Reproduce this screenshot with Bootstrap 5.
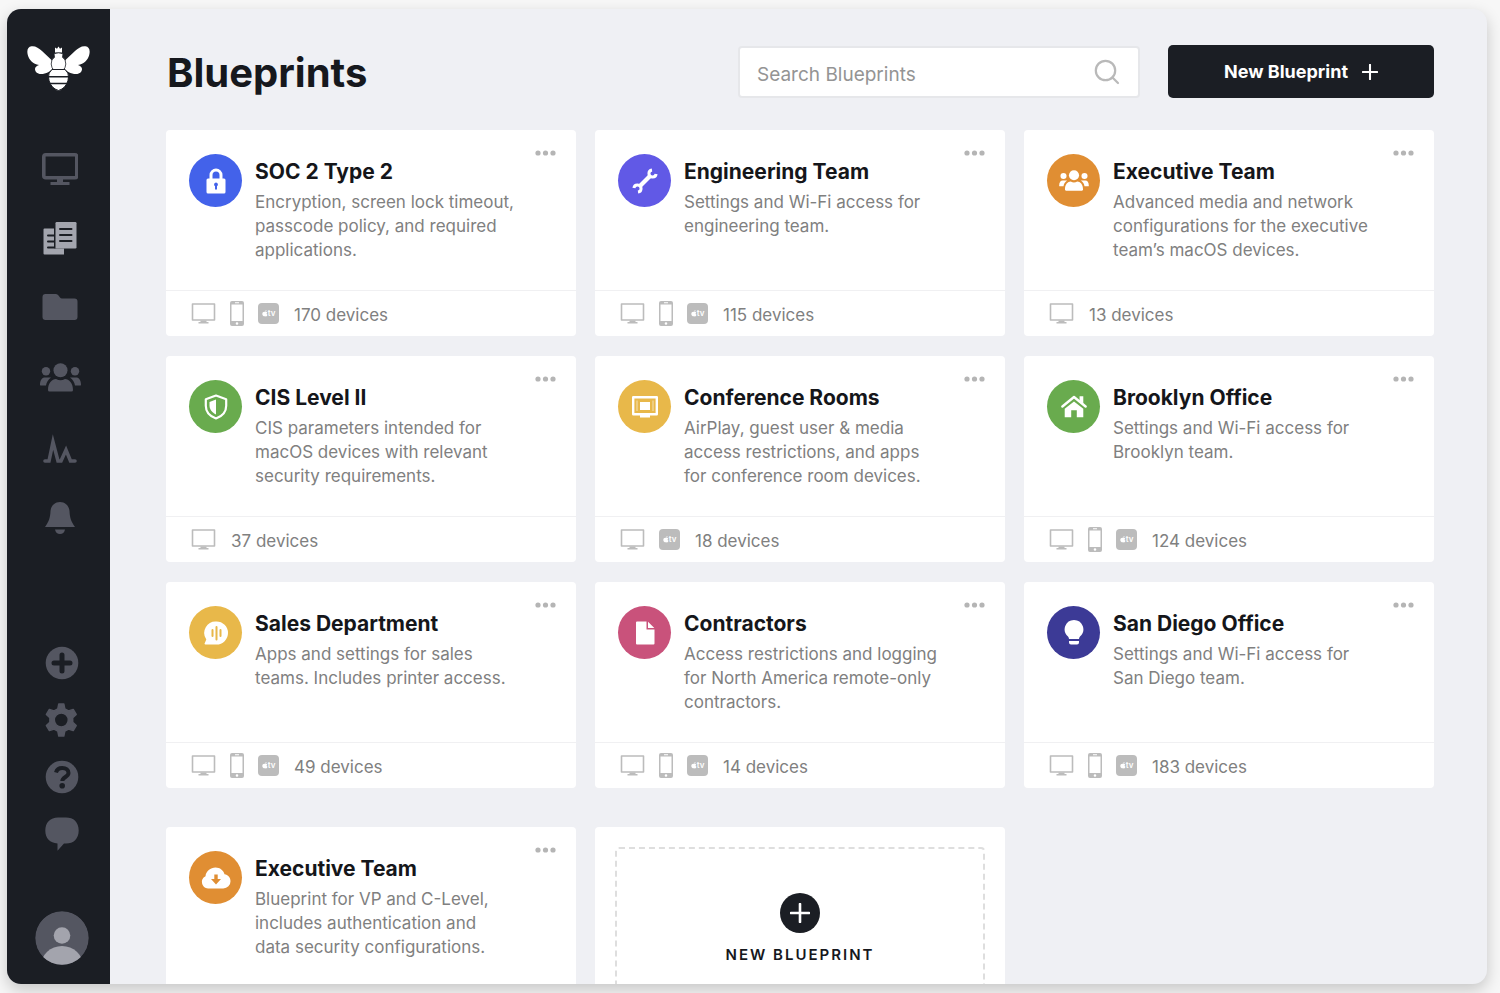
<!DOCTYPE html>
<html lang="en">
<head>
<meta charset="utf-8">
<meta name="viewport" content="width=device-width, initial-scale=1">
<title>Blueprints</title>
<link href="https://cdn.jsdelivr.net/npm/bootstrap@5.3.0/dist/css/bootstrap.min.css" rel="stylesheet">
<style>
  body { font-family: Inter, "Liberation Sans", sans-serif; background: #f7f7f7; color: #16181d; padding: 9px 13px 9px 7px; height: 100vh; overflow: hidden; }
  .app-window { border-radius: 14px; background: #eff0f4; box-shadow: 0 6px 16px rgba(0,0,0,.2); overflow: hidden; }
  .side { width: 103px; background: #1b1e24; padding: 37px 0 19px; }
  .side a { color: #545661; line-height: 0; }
  .side a.current { color: #a3a5ae; }
  .side-main { gap: 34px; margin-top: 59px; padding-left: 3px; }
  .side-tools { gap: 23px; padding-left: 7px; margin-bottom: 60px; }
  .side-user { padding-left: 7px; }
  .page { padding: 36px 53px 0 56px; }
  .page-head { margin-bottom: 32px; gap: 28px; }
  .page-head h1 { font-size: 40px; font-weight: 700; line-height: 51px; padding: 2px 0 0 1px; }
  .search-box { width: 402px; height: 52px; background: #fff; border: 2px solid #e6e7ea; border-radius: 4px; padding-right: 18px; }
  .search-box input { font-size: 19px; padding: 5px 0 0 17px; border: 0; box-shadow: none; background: none; color: #333; }
  .search-box input::placeholder { color: #949494; }
  .new-btn { width: 266px; height: 53px; background: #1b1e24; color: #fff; border-radius: 5px; font-size: 18px; font-weight: 700; gap: 14px; }
  .new-btn:hover { background: #2b2f38; color: #fff; }
  .tiles { display: grid; grid-template-columns: repeat(3, minmax(0, 1fr)); gap: 20px 19px; }
  .tiles-more { margin-top: 39px; }
  .tile { border: 0; border-radius: 4px; height: 206px; }
  .tile .card-body { padding: 24px 20px 0 23px; gap: 13px; }
  .tile h2 { font-size: 21px; font-weight: 700; line-height: 28px; margin: 4px 0; color: #15161a; }
  .tile p { font-size: 17px; line-height: 24px; color: #808080; margin: 0; max-width: 260px; }
  .disc { width: 53px; height: 53px; border-radius: 50%; color: #fff; flex: none; }
  .blue { background: #4362ea; } .violet { background: #6159e6; } .orange { background: #e08e33; }
  .green { background: #69ab4e; } .yellow { background: #e8b84a; } .pink { background: #c9527b; } .indigo { background: #3c3a96; }
  .dots { top: 12px; right: 20px; padding: 0; border: 0; background: none; color: #b5b5b5; line-height: 0; height: 22px; }
  .tile .card-footer { height: 46px; border-top: 1px solid #f0f0f2; background: none; padding: 0 25px; gap: 14px; color: #bcbcbc; }
  .count { font-size: 17px; line-height: 24px; padding: 3px 0 0 1px; color: #808080; }
  .atv { width: 21px; height: 21px; border-radius: 4px; background: #bcbcbc; color: #fff; font-size: 8px; font-weight: 600; line-height: 21px; }
  .add-box { margin: 20px; border: 2px dashed #dedede; border-radius: 4px; background: none; gap: 10px; font-size: 15px; font-weight: 600; line-height: 24px; letter-spacing: 2px; color: #16181d; }
  .add-disc { width: 40px; height: 40px; border-radius: 50%; background: #1b1e24; color: #fff; }
</style>
</head>
<body>
<svg width="0" height="0" class="position-absolute" aria-hidden="true">
  <symbol id="monitor" viewBox="0 0 25 21"><path d="M1.500 1h22v16h-22z" fill="none" stroke="currentColor" stroke-width="1.600" stroke-linejoin="round"/><path d="M9.500 17.500h6v1.500h2v1.600h-10V19h2z" fill="currentColor"/></symbol>
  <symbol id="phone" viewBox="0 0 14 25"><path fill="currentColor" fill-rule="evenodd" d="M2 0h10a2 2 0 0 1 2 2v21a2 2 0 0 1-2 2H2a2 2 0 0 1-2-2V2a2 2 0 0 1 2-2zM1.500 3.500v16.500h11V3.500zM5 1.300v1h4v-1zM7 21.200a1.300 1.300 0 1 0 0 2.600a1.300 1.300 0 1 0 0-2.600z"/></symbol>
  <symbol id="apple" viewBox="0 0 6 7"><path fill="currentColor" d="M3.300 2c.7-.5 1.600-.3 2 .2-1 .8-.8 2.100.2 2.600C5 6.300 4.300 6.700 3.300 6.200 2.300 6.700.300 6 .300 3.900.300 2.300 1.800 1.400 3.300 2zM3.200 1.600c0-.9.600-1.500 1.300-1.600 0 .9-.6 1.600-1.300 1.600z"/></symbol>
  <symbol id="more" viewBox="0 0 21 6"><g fill="currentColor"><circle cx="3" cy="3" r="2.600"/><circle cx="10.500" cy="3" r="2.600"/><circle cx="18" cy="3" r="2.600"/></g></symbol>
  <symbol id="plus" viewBox="0 0 20 20"><path d="M10 1v18M1 10h18" stroke="currentColor" stroke-width="2.600" stroke-linecap="round"/></symbol>
  <symbol id="people" viewBox="0 0 41 29"><g fill="currentColor"><circle cx="20.500" cy="7.200" r="7"/><circle cx="6" cy="8.200" r="4.200"/><circle cx="35" cy="8.200" r="4.200"/><path d="M8 27c0-7 4-11 8-11 3 1.600 6 1.600 9 0 4 0 8 4 8 11q0 1.500-1.500 1.500h-22Q8 28.500 8 27zM0 22c0-5 2-7.500 5-7.500h6C8 17 6.500 19 6 22.500H1.500Q0 22.500 0 22zM41 22c0-5-2-7.500-5-7.500h-6c3 2.500 4.500 4.500 5 8h4.500q1.500 0 1.500-.5z"/></g></symbol>
</svg>

<div class="app-window d-flex h-100">
  <aside class="side d-flex flex-column align-items-center flex-shrink-0">
    <a href="#" class="text-white" aria-label="Home"><svg width="63" height="45" viewBox="0 0 63 45" fill="currentColor">
      <g id="wing"><path d="M4.500.300C8-.3 12 2 15 5l9 8.500q3 3 2.500 7C24 26 19 28 14 28c-4 0-6-2.500-6-5 0-2 1.500-3 4-4C6 18 2 14 .800 9-.5 4 1 .800 4.500.300z"/></g>
      <use href="#wing" transform="matrix(-1 0 0 1 63 0)"/>
      <path d="M28 1.500l2 1.300L31.500.500 33 2.800l2-1.300v5h-7z"/>
      <path stroke="#1b1e24" stroke-width=".8" d="M27 7.800q4.500-2 9 0l-.5 3.500q3.500 2 3.300 6.700-.5 4-2 5.500h-10.600q-1.500-1.500-2-5.500-.2-4.700 3.300-6.700z"/>
      <path stroke="#1b1e24" stroke-width="1" d="M25 23.500h13q4 3.500 3.500 7.500-.5 8-6.500 12-3.500 3-7 0-6-4-6.500-12-.5-4 3.500-7.500z"/>
      <path stroke="#1b1e24" stroke-width="1.500" d="M21 30.800h21M21.500 37.500h20"/>
    </svg></a>
    <nav class="side-main d-flex flex-column align-items-center" aria-label="Main">
      <a href="#" aria-label="Devices"><svg width="36" height="36" viewBox="0 0 36 36"><rect x="1.800" y="4.800" width="33" height="23" rx="2" fill="none" stroke="currentColor" stroke-width="3.600"/><path fill="currentColor" d="M15 29h6v3h6.500v3h-19v-3H15z"/></svg></a>
      <a href="#" class="current" aria-label="Blueprints"><svg width="36" height="36" viewBox="0 0 36 36"><path fill="currentColor" d="M2.500 8.500H12v20h10v6H2.500q-1 0-1-1v-24q0-1 1-1z"/><rect x="13.500" y="2" width="21" height="26.500" rx="1.200" fill="currentColor"/><path d="M18 9h11.500M18 15h11.500M18 21h11.500M6 15.500h6M6 21.500h6M6 27.500h6" stroke="#1b1e24" stroke-width="2" stroke-linecap="round"/></svg></a>
      <a href="#" aria-label="Library"><svg width="36" height="36" viewBox="0 0 36 36"><path fill="currentColor" d="M3.500 4H14q1.500 0 2.500 1.500l1.500 2q.8 1 2 1h12.500q3 0 3 3V27q0 3-3 3h-29q-3 0-3-3V7q0-3 3-3z"/></svg></a>
      <a href="#" aria-label="Users"><svg width="41" height="36" viewBox="0 -3 41 36"><use href="#people" width="41" height="29"/></svg></a>
      <a href="#" aria-label="Activity"><svg width="36" height="36" viewBox="0 0 36 36"><path d="M3 31h4L11 12l5 19h3L24 20l4.500 11h4.500" fill="none" stroke="currentColor" stroke-width="3.600" stroke-linecap="round" stroke-miterlimit="12"/></svg></a>
      <a href="#" aria-label="Alerts"><svg width="36" height="36" viewBox="0 0 36 36"><path fill="currentColor" d="M18 2c5 0 9 3.500 9.500 9 .3 7 1.500 10 5.500 16H3c4-6 5.200-9 5.500-16C9 5.500 13 2 18 2zM13 29.500h10c-.5 3-2.500 4.500-5 4.500s-4.500-1.500-5-4.500z"/></svg></a>
    </nav>
    <nav class="side-tools d-flex flex-column align-items-center mt-auto" aria-label="Tools">
      <a href="#" aria-label="Add"><svg width="34" height="34" viewBox="0 0 34 34"><circle cx="17" cy="17" r="16.300" fill="currentColor"/><path d="M17 9v16M9 17h16" stroke="#1b1e24" stroke-width="5" stroke-linecap="round"/></svg></a>
      <a href="#" aria-label="Settings"><svg width="34" height="34" viewBox="0 0 34 34"><path fill="currentColor" stroke="currentColor" stroke-width="1.500" stroke-linejoin="round" fill-rule="evenodd" d="M13.800 1h5l1 4.800 3.700 2.100 4.700-1.500 3 5-3.500 3.400v4.400l3.500 3.400-3 5-4.700-1.500-3.700 2.100-1 4.800h-5l-1-4.800-3.700-2.100-4.700 1.500-3-5 3.500-3.400v-4.400L1.400 11.400l3-5 4.700 1.500 3.700-2.100zM16.300 10a7 7 0 1 0 0 14a7 7 0 1 0 0-14z"/></svg></a>
      <a href="#" aria-label="Help"><svg width="34" height="34" viewBox="0 0 34 34"><circle cx="17" cy="17" r="16.300" fill="currentColor"/><path d="M11 12.500c.8-3 3-4.500 6.300-4.500 3.700 0 6.200 2 6.200 5 0 4-6 4-6.200 8" fill="none" stroke="#1b1e24" stroke-width="4"/><circle cx="17.200" cy="25.800" r="2.800" fill="#1b1e24"/></svg></a>
      <a href="#" aria-label="Chat"><svg width="34" height="34" viewBox="0 0 34 34"><path fill="currentColor" d="M13 .500h8C28.500.500 33.700 5 33.700 13.500S28.500 26.500 21 26.500h-2l-6.500 7.200v-7.300C5 26 .300 21.500.300 13.500S5.500.500 13 .500z"/></svg></a>
    </nav>
    <a href="#" class="side-user" aria-label="Account"><svg width="54" height="54" viewBox="0 0 54 54"><clipPath id="ring"><circle cx="27" cy="27" r="26.700"/></clipPath><g clip-path="url(#ring)"><circle cx="27" cy="27" r="27" fill="currentColor"/><g fill="#a3a4ad"><circle cx="27" cy="24.500" r="8.300"/><ellipse cx="27" cy="55" rx="21" ry="20"/></g></g></svg></a>
  </aside>

  <main class="page flex-grow-1 overflow-hidden">
    <header class="page-head d-flex align-items-center">
      <h1 class="mb-0 me-auto">Blueprints</h1>
      <form class="search-box d-flex align-items-center" role="search">
        <input class="form-control h-100" type="search" placeholder="Search Blueprints" aria-label="Search Blueprints">
        <svg class="flex-shrink-0" width="26" height="26" viewBox="0 0 26 26" fill="none" stroke="#b9b9b9" stroke-width="2.200" stroke-linecap="round"><circle cx="11.500" cy="11.500" r="9.700"/><path d="M18.500 18.500l5.500 5.500"/></svg>
      </form>
      <button type="button" class="btn new-btn d-flex align-items-center justify-content-center">New Blueprint <svg width="16" height="16"><use href="#plus"/></svg></button>
    </header>

    <section class="tiles">
      <article class="card tile">
        <div class="card-body d-flex">
          <div class="disc blue d-flex align-items-center justify-content-center"><svg width="20" height="26" viewBox="0 0 20 26"><path d="M5 12V7a5 5 0 0 1 10 0v5" fill="none" stroke="currentColor" stroke-width="3"/><rect x=".500" y="10.500" width="19" height="15" rx="1.500" fill="currentColor"/><path fill="#4362ea" d="M10 14.500a2 2 0 0 1 1 3.700v3.300H9v-3.300a2 2 0 0 1 1-3.700z"/></svg></div>
          <div><h2>SOC 2 Type 2</h2><p>Encryption, screen lock timeout, passcode policy, and required applications.</p></div>
          <button type="button" class="dots position-absolute" aria-label="More"><svg width="21" height="6"><use href="#more"/></svg></button>
        </div>
        <div class="card-footer d-flex align-items-center"><svg width="25" height="21"><use href="#monitor"/></svg><svg width="14" height="25"><use href="#phone"/></svg><span class="atv d-flex align-items-center justify-content-center"><svg width="6" height="7"><use href="#apple"/></svg>tv</span><span class="count">170 devices</span></div>
      </article>

      <article class="card tile">
        <div class="card-body d-flex">
          <div class="disc violet d-flex align-items-center justify-content-center"><svg width="28" height="28" viewBox="0 0 28 28" fill="none" stroke="currentColor"><path d="M9 19L19 9" stroke-width="4.200"/><path d="M21 2.900A3.600 3.600 0 1 0 25.100 7M7 25.100A3.600 3.600 0 1 0 2.900 21" stroke-width="3"/></svg></div>
          <div><h2>Engineering Team</h2><p>Settings and Wi-Fi access for engineering team.</p></div>
          <button type="button" class="dots position-absolute" aria-label="More"><svg width="21" height="6"><use href="#more"/></svg></button>
        </div>
        <div class="card-footer d-flex align-items-center"><svg width="25" height="21"><use href="#monitor"/></svg><svg width="14" height="25"><use href="#phone"/></svg><span class="atv d-flex align-items-center justify-content-center"><svg width="6" height="7"><use href="#apple"/></svg>tv</span><span class="count">115 devices</span></div>
      </article>

      <article class="card tile">
        <div class="card-body d-flex">
          <div class="disc orange d-flex align-items-center justify-content-center"><svg width="30" height="21"><use href="#people"/></svg></div>
          <div><h2>Executive Team</h2><p>Advanced media and network configurations for the executive team’s macOS devices.</p></div>
          <button type="button" class="dots position-absolute" aria-label="More"><svg width="21" height="6"><use href="#more"/></svg></button>
        </div>
        <div class="card-footer d-flex align-items-center"><svg width="25" height="21"><use href="#monitor"/></svg><span class="count">13 devices</span></div>
      </article>

      <article class="card tile">
        <div class="card-body d-flex">
          <div class="disc green d-flex align-items-center justify-content-center"><svg width="24" height="26" viewBox="0 0 24 26"><path d="M12 1.500l10.200 3.800v6.500c0 6-4 10.500-10.200 12.700C5.800 22.300 1.800 17.800 1.800 11.800V5.300z" fill="none" stroke="currentColor" stroke-width="2.200" stroke-linejoin="round"/><path fill="currentColor" d="M12 5.500v15C8 18.500 5.500 15.500 5.500 11.500V8z"/></svg></div>
          <div><h2>CIS Level II</h2><p>CIS parameters intended for macOS devices with relevant security requirements.</p></div>
          <button type="button" class="dots position-absolute" aria-label="More"><svg width="21" height="6"><use href="#more"/></svg></button>
        </div>
        <div class="card-footer d-flex align-items-center"><svg width="25" height="21"><use href="#monitor"/></svg><span class="count">37 devices</span></div>
      </article>

      <article class="card tile">
        <div class="card-body d-flex">
          <div class="disc yellow d-flex align-items-center justify-content-center"><svg width="26" height="22" viewBox="0 0 26 22"><path d="M1.200 1.200h23.600v17H1.200z" fill="none" stroke="currentColor" stroke-width="2.400" stroke-linejoin="round"/><path fill="currentColor" fill-rule="evenodd" d="M8 18h10v3.500H8zM8 6h10v8H8z"/><path d="M5 4.500v10.500M21 4.500v10.500" stroke="currentColor" stroke-width="1" opacity=".6"/></svg></div>
          <div><h2>Conference Rooms</h2><p>AirPlay, guest user &amp; media access restrictions, and apps for conference room devices.</p></div>
          <button type="button" class="dots position-absolute" aria-label="More"><svg width="21" height="6"><use href="#more"/></svg></button>
        </div>
        <div class="card-footer d-flex align-items-center"><svg width="25" height="21"><use href="#monitor"/></svg><span class="atv d-flex align-items-center justify-content-center"><svg width="6" height="7"><use href="#apple"/></svg>tv</span><span class="count">18 devices</span></div>
      </article>

      <article class="card tile">
        <div class="card-body d-flex">
          <div class="disc green d-flex align-items-center justify-content-center"><svg width="26" height="23" viewBox="0 0 28 24"><path d="M1.500 12L14 1.800 26.500 12" fill="none" stroke="currentColor" stroke-width="2.600" stroke-linecap="round" stroke-linejoin="round"/><path fill="currentColor" d="M20 1h4v8l-4-3.500zM14 6.500l10 8V23.500h-7V16h-6v7.500H4v-9z"/></svg></div>
          <div><h2>Brooklyn Office</h2><p>Settings and Wi-Fi access for Brooklyn team.</p></div>
          <button type="button" class="dots position-absolute" aria-label="More"><svg width="21" height="6"><use href="#more"/></svg></button>
        </div>
        <div class="card-footer d-flex align-items-center"><svg width="25" height="21"><use href="#monitor"/></svg><svg width="14" height="25"><use href="#phone"/></svg><span class="atv d-flex align-items-center justify-content-center"><svg width="6" height="7"><use href="#apple"/></svg>tv</span><span class="count">124 devices</span></div>
      </article>

      <article class="card tile">
        <div class="card-body d-flex">
          <div class="disc yellow d-flex align-items-center justify-content-center"><svg width="24" height="24" viewBox="0 0 24 24"><path fill="currentColor" d="M12.500.500a11.500 11.500 0 0 1 0 23H1.500q-1.500 0-.7-1.500l1.500-3.500A11.500 11.500 0 0 1 12.500.500z"/><path d="M8.500 9v6M12.500 6v12.500M16.500 9v6" stroke="#e8b84a" stroke-width="2" stroke-linecap="round"/></svg></div>
          <div><h2>Sales Department</h2><p>Apps and settings for sales teams. Includes printer access.</p></div>
          <button type="button" class="dots position-absolute" aria-label="More"><svg width="21" height="6"><use href="#more"/></svg></button>
        </div>
        <div class="card-footer d-flex align-items-center"><svg width="25" height="21"><use href="#monitor"/></svg><svg width="14" height="25"><use href="#phone"/></svg><span class="atv d-flex align-items-center justify-content-center"><svg width="6" height="7"><use href="#apple"/></svg>tv</span><span class="count">49 devices</span></div>
      </article>

      <article class="card tile">
        <div class="card-body d-flex">
          <div class="disc pink d-flex align-items-center justify-content-center"><svg width="20" height="24" viewBox="0 0 20 24"><path fill="currentColor" d="M2 .500h9.500v8h8v14q0 1-1 1H2q-1 0-1-1v-21q0-1 1-1zM13 .800l6.300 6.200H13z"/></svg></div>
          <div><h2>Contractors</h2><p>Access restrictions and logging for North America remote-only contractors.</p></div>
          <button type="button" class="dots position-absolute" aria-label="More"><svg width="21" height="6"><use href="#more"/></svg></button>
        </div>
        <div class="card-footer d-flex align-items-center"><svg width="25" height="21"><use href="#monitor"/></svg><svg width="14" height="25"><use href="#phone"/></svg><span class="atv d-flex align-items-center justify-content-center"><svg width="6" height="7"><use href="#apple"/></svg>tv</span><span class="count">14 devices</span></div>
      </article>

      <article class="card tile">
        <div class="card-body d-flex">
          <div class="disc indigo d-flex align-items-center justify-content-center"><svg width="20" height="25" viewBox="0 0 20 25"><path fill="currentColor" d="M10 0a9.300 9.300 0 0 1 6 16.400q-1 1-1 2.600H5q0-1.600-1-2.600A9.300 9.300 0 0 1 10 0zM5 21h10v1.500q0 2-2 2H7q-2 0-2-2z"/></svg></div>
          <div><h2>San Diego Office</h2><p>Settings and Wi-Fi access for San Diego team.</p></div>
          <button type="button" class="dots position-absolute" aria-label="More"><svg width="21" height="6"><use href="#more"/></svg></button>
        </div>
        <div class="card-footer d-flex align-items-center"><svg width="25" height="21"><use href="#monitor"/></svg><svg width="14" height="25"><use href="#phone"/></svg><span class="atv d-flex align-items-center justify-content-center"><svg width="6" height="7"><use href="#apple"/></svg>tv</span><span class="count">183 devices</span></div>
      </article>
    </section>

    <section class="tiles tiles-more">
      <article class="card tile">
        <div class="card-body d-flex">
          <div class="disc orange d-flex align-items-center justify-content-center"><svg width="30" height="22" viewBox="0 0 30 22"><path fill="currentColor" d="M7 21.500a6.500 6.500 0 0 1-2.500-12.300C5 4 9.500.500 14.500.500c4.500 0 8 2.800 9 6.800 3.500.4 6 3.300 6 6.900a7.200 7.200 0 0 1-7.200 7.300z"/><path fill="#e08e33" d="M13.300 7.500h3.400V12H20l-5 5.500-5-5.500h3.300z"/></svg></div>
          <div><h2>Executive Team</h2><p>Blueprint for VP and C-Level, includes authentication and data security configurations.</p></div>
          <button type="button" class="dots position-absolute" aria-label="More"><svg width="21" height="6"><use href="#more"/></svg></button>
        </div>
      </article>
      <article class="card tile">
        <button type="button" class="add-box flex-grow-1 d-flex flex-column align-items-center justify-content-center">
          <span class="add-disc d-flex align-items-center justify-content-center"><svg width="20" height="20"><use href="#plus"/></svg></span>
          <span>NEW BLUEPRINT</span>
        </button>
      </article>
    </section>
  </main>
</div>
<script src="https://cdn.jsdelivr.net/npm/bootstrap@5.3.0/dist/js/bootstrap.bundle.min.js"></script>
</body>
</html>
